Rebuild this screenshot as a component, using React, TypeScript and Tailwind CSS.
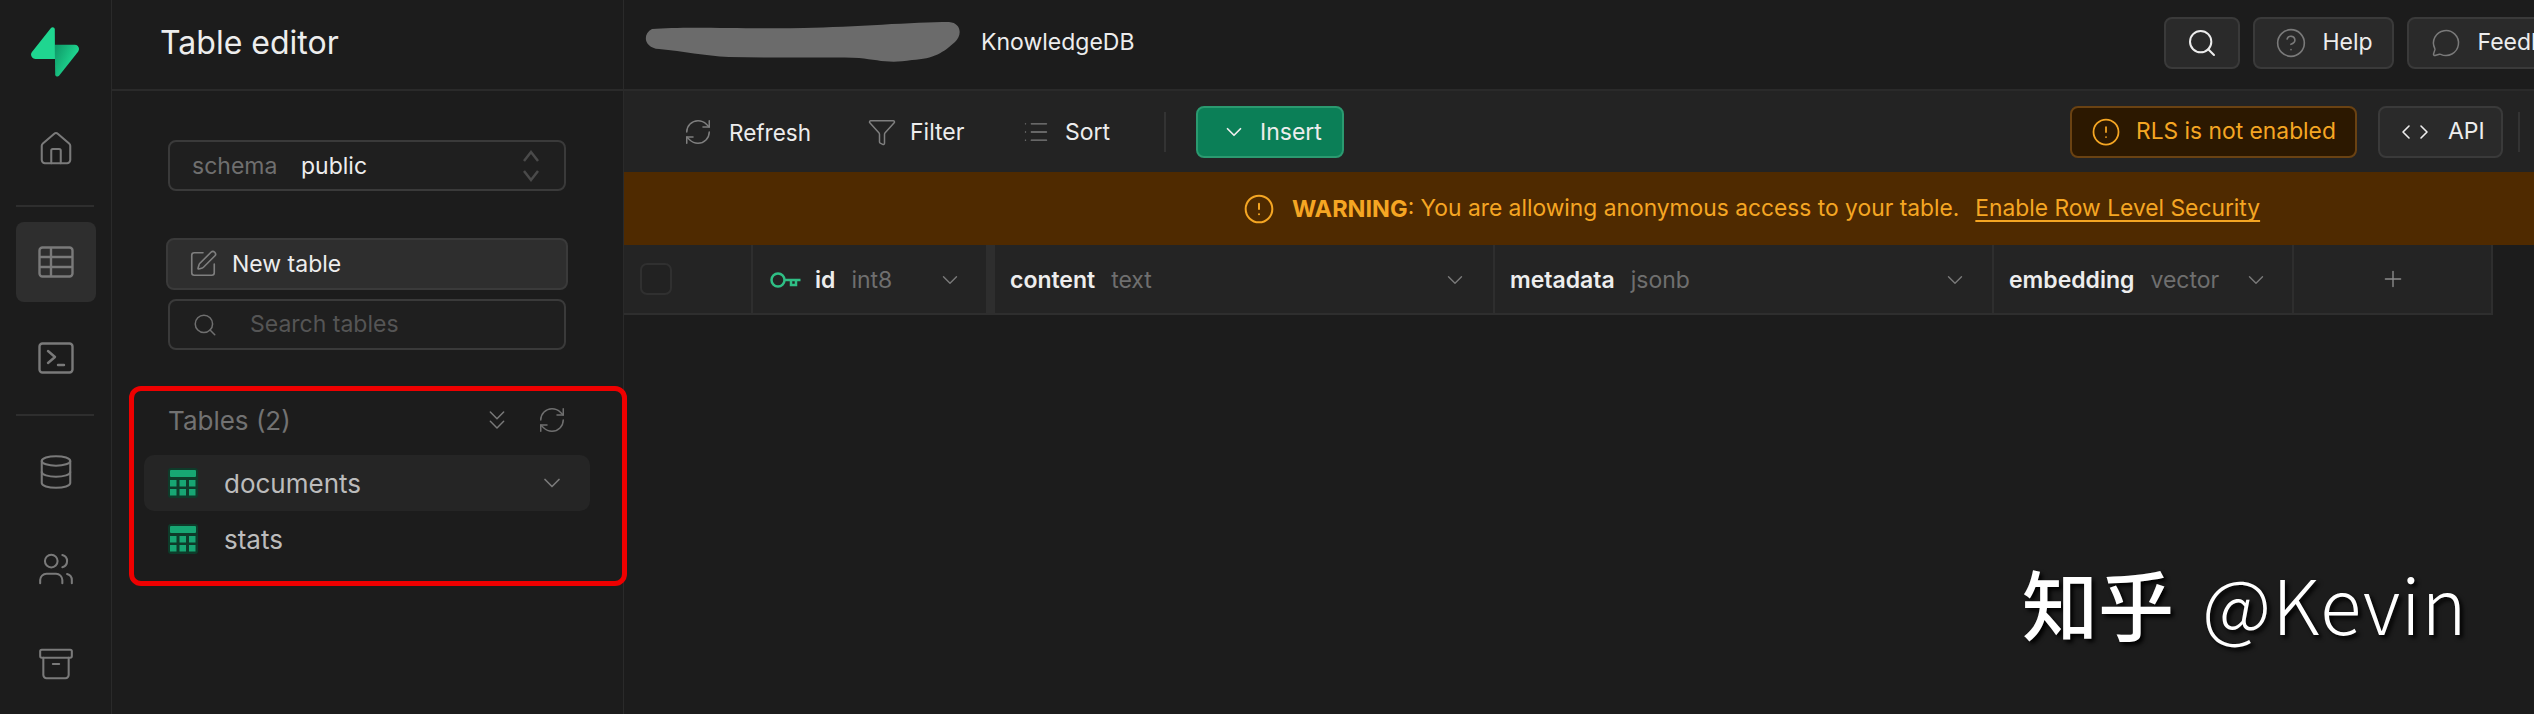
import React from "react";
import { House, Database, Users, Archive, SquarePen, Search, ChevronsDown, RefreshCw, ChevronDown, Funnel, List, CircleAlert, CircleHelp, MessageCircle, Plus, ChevronLeft, ChevronRight } from "lucide-react";

const Logo = () => (
  <svg width="48" height="50" viewBox="0 0 109 113" fill="none">
    <defs>
      <linearGradient id="lg" x1="54" y1="50" x2="100" y2="72" gradientUnits="userSpaceOnUse">
        <stop stopColor="#0f9a68" />
        <stop offset="1" stopColor="#1fd690" />
      </linearGradient>
    </defs>
    <path d="M63.7076 110.284C60.8481 113.885 55.0502 111.912 54.9813 107.314L53.9738 40.0627L99.1935 40.0627C107.384 40.0627 111.952 49.5228 106.859 55.9374L63.7076 110.284Z" fill="url(#lg)" />
    <path d="M45.317 2.07103C48.1765 -1.53037 53.9745 0.442937 54.0434 5.041L54.4849 72.2922H9.83113C1.64038 72.2922 -2.92775 62.8321 2.1655 56.4175L45.317 2.07103Z" fill="#1fd690" />
  </svg>
);

const GridIcon = () => (
  <svg width="36" height="32" viewBox="0 0 36 32" fill="none" stroke="#7a7a7a" strokeWidth="2.4">
    <rect x="1.5" y="1.5" width="33" height="29" rx="3" />
    <path d="M1.5 11h33M1.5 21h33M13 1.500v29" />
  </svg>
);

const TerminalIcon = () => (
  <svg width="36" height="32" viewBox="0 0 36 32" fill="none" stroke="#7a7a7a" strokeWidth="2.4" strokeLinecap="round" strokeLinejoin="round">
    <rect x="1.5" y="1.5" width="33" height="29" rx="3" />
    <path d="M10 9l7 6-7 6M20 23h6" />
  </svg>
);

const GreenTable = () => (
  <svg width="30" height="30" viewBox="0 0 30 30">
    <rect x="0" y="0" width="30" height="30" rx="3" fill="#0e3b2a" />
    <rect x="2" y="2" width="26" height="7" rx="1" fill="#17a673" />
    <g fill="#17a673">
      <rect x="2" y="12" width="6.500" height="6.500" /><rect x="11.500" y="12" width="6.500" height="6.500" /><rect x="21" y="12" width="6.500" height="6.500" />
      <rect x="2" y="21" width="6.500" height="6.500" /><rect x="11.500" y="21" width="6.500" height="6.500" /><rect x="21" y="21" width="6.500" height="6.500" />
    </g>
  </svg>
);

const KeyIcon = () => (
  <svg width="32" height="20" viewBox="0 0 32 20" fill="none" stroke="#2fbf85" strokeWidth="2.500">
    <circle cx="8" cy="10" r="6.500" />
    <path d="M14.500 10H30.500M21 10v5h5v-5" />
  </svg>
);

const Scribble = () => (
  <svg className="shrink-0" width="318" height="42" viewBox="0 0 318 42">
    <path d="M8 7C40 4 100 7 160 6C210 5 270 0 305 0C318 1 318 14 311 20C300 30 290 37 268 38C245 42 235 38 215 36C180 35 130 36 85 35C60 34 40 29 15 27C0 26 -2 12 8 7Z" fill="#6b6b6b" />
  </svg>
);

const RailItem = ({ children, active }: { children: React.ReactNode; active?: boolean }) => (
  <div className={`flex h-[80px] w-[80px] items-center justify-center rounded-[8px] ${active ? "bg-[#2e2e2e]" : ""}`}>{children}</div>
);

const Rail = () => (
  <div className="flex h-full w-[112px] shrink-0 flex-col items-start border-r border-[#2a2a2a] pl-[16px]">
    <div className="mt-[27px] ml-[15px] h-[50px]"><Logo /></div>
    <div className="mt-[32px]"><RailItem><House size={38} strokeWidth={1.3} color="#7a7a7a" /></RailItem></div>
    <div className="mt-[16px] h-[2px] w-[78px] bg-[#2e2e2e]" />
    <div className="mt-[15px]"><RailItem active><GridIcon /></RailItem></div>
    <div className="mt-[16px]"><RailItem><TerminalIcon /></RailItem></div>
    <div className="mt-[16px] h-[2px] w-[78px] bg-[#2e2e2e]" />
    <div className="mt-[16px]"><RailItem><Database size={38} strokeWidth={1.3} color="#7a7a7a" /></RailItem></div>
    <div className="mt-[17px]"><RailItem><Users size={38} strokeWidth={1.3} color="#7a7a7a" /></RailItem></div>
    <div className="mt-[15px]"><RailItem><Archive size={38} strokeWidth={1.3} color="#7a7a7a" /></RailItem></div>
  </div>
);

const Sidebar = () => (
  <div className="flex h-full w-[512px] shrink-0 flex-col border-r border-[#2a2a2a]">
    <div className="flex h-[91px] shrink-0 items-center border-b-2 border-[#2a2a2a] pb-[4px] pl-[48px] text-[32px] leading-none text-[#ededed]">Table editor</div>
    <div className="ml-[56px] mt-[49px] flex h-[51px] w-[398px] items-center rounded-[8px] border-2 border-[#3a3a3a] bg-[#1f1f1f] pl-[22px] pr-[24px] pt-[1px] text-[23px]">
      <span className="w-[109px] text-[#6f6f6f]">schema</span>
      <span className="text-[#ededed]">public</span>
      <svg className="ml-auto" width="18" height="36" viewBox="0 0 18 36" fill="none" stroke="#4a4a4a" strokeWidth="2.500"><path d="M2 13l7-9 7 9M2 23l7 9 7-9" /></svg>
    </div>
    <div className="ml-[54px] mt-[47px] flex h-[52px] w-[402px] items-center rounded-[8px] border-2 border-[#3a3a3a] bg-[#2e2e2e] pl-[20px] text-[23px] text-[#ededed]">
      <SquarePen size={30} strokeWidth={1.3} color="#7f7f7f" />
      <span className="ml-[14px]">New table</span>
    </div>
    <div className="ml-[56px] mt-[9px] flex h-[51px] w-[398px] items-center rounded-[8px] border-2 border-[#3a3a3a] bg-[#1f1f1f] pl-[22px] text-[23px] text-[#555555]">
      <Search size={26} strokeWidth={1.4} color="#6f6f6f" />
      <span className="ml-[32px]">Search tables</span>
    </div>
    <div className="relative z-10 ml-[17px] mt-[36px] h-[200px] w-[498px] rounded-[12px] border-[5px] border-[#ee0000] pt-[10px]">
      <div className="ml-[34px] flex h-[38px] w-[399px] items-center text-[26px] text-[#727272]">
        <span>Tables (2)</span>
        <ChevronsDown size={32} strokeWidth={1.1} color="#7a7a7a" className="ml-auto" />
        <RefreshCw size={30} strokeWidth={1.2} color="#6f6f6f" className="ml-[24px]" />
      </div>
      <div className="ml-[10px] mt-[16px] flex h-[56px] w-[446px] items-center rounded-[10px] bg-[#252525] pl-[24px] pr-[24px] text-[26px] text-[#bcbcbc]">
        <GreenTable />
        <span className="ml-[26px]">documents</span>
        <ChevronDown size={28} strokeWidth={1.5} color="#7a7a7a" className="ml-auto" />
      </div>
      <div className="ml-[10px] flex h-[56px] w-[446px] items-center pl-[24px] text-[26px] text-[#bcbcbc]">
        <GreenTable />
        <span className="ml-[26px]">stats</span>
      </div>
    </div>
  </div>
);

const TopBar = () => (
  <div className="flex h-[91px] shrink-0 items-center border-b-2 border-[#2a2a2a] pb-[4px] pl-[20px] text-[23px]">
    <Scribble />
    <span className="ml-[19px] shrink-0 text-[#ededed]">KnowledgeDB</span>
    <div className="ml-[1030px] flex h-[52px] w-[76px] shrink-0 items-center justify-center rounded-[8px] border-2 border-[#3a3a3a] bg-[#2a2a2a]">
      <Search size={32} strokeWidth={1.5} color="#ededed" />
    </div>
    <div className="ml-[13px] flex h-[52px] w-[141px] shrink-0 items-center rounded-[8px] border-2 border-[#3a3a3a] bg-[#2a2a2a] pl-[20px] text-[#ededed]">
      <CircleHelp size={32} strokeWidth={1.2} color="#7a7a7a" />
      <span className="ml-[15px]">Help</span>
    </div>
    <div className="ml-[13px] flex h-[52px] w-[200px] shrink-0 items-center rounded-[8px] border-2 border-[#3a3a3a] bg-[#2a2a2a] pl-[22px] text-[#ededed]">
      <MessageCircle size={30} strokeWidth={1.2} color="#7a7a7a" />
      <span className="ml-[16px]">Feedback</span>
    </div>
  </div>
);

const Toolbar = () => (
  <div className="flex h-[81px] shrink-0 items-center bg-[#232323] pl-[59px] text-[23px] text-[#ededed]">
    <div className="flex w-[184px] items-center"><RefreshCw size={30} strokeWidth={1.2} color="#7f7f7f" /><span className="ml-[16px] pt-[2px] text-[22.500px]">Refresh</span></div>
    <div className="flex w-[155px] items-center"><Funnel size={30} strokeWidth={1.2} color="#7f7f7f" /><span className="ml-[13px] pt-[2px]">Filter</span></div>
    <div className="flex w-[142px] items-center"><List size={28} strokeWidth={1.2} color="#7f7f7f" /><span className="ml-[15px] pt-[2px]">Sort</span></div>
    <div className="h-[40px] w-[2px] bg-[#333333]" />
    <div className="ml-[30px] flex h-[52px] w-[148px] shrink-0 items-center rounded-[8px] border-2 border-[#2b9a70] bg-[#0b7f57] pl-[23px]">
      <ChevronDown size={26} strokeWidth={1.6} color="#ededed" />
      <span className="ml-[13px] pt-[2px]">Insert</span>
    </div>
    <div className="ml-[726px] flex h-[52px] w-[287px] shrink-0 items-center rounded-[8px] border-2 border-[#6a4212] bg-[#2c1800] pl-[19px] text-[#f5a623]">
      <CircleAlert size={30} strokeWidth={1.4} />
      <span className="ml-[15px] text-[22.800px]">RLS is not enabled</span>
    </div>
    <div className="ml-[21px] flex h-[52px] w-[125px] shrink-0 items-center rounded-[8px] border-2 border-[#3a3a3a] bg-[#2a2a2a] pl-[14px]">
      <ChevronLeft size={24} strokeWidth={1.6} className="-mr-[6px]" />
      <ChevronRight size={24} strokeWidth={1.6} />
      <span className="ml-[12px]">API</span>
    </div>
    <div className="ml-[15px] h-[40px] w-[2px] bg-[#333333]" />
  </div>
);

const Banner = () => (
  <div className="flex h-[73px] shrink-0 items-center justify-center bg-[#4f2a00] pl-[333px] text-[23px] text-[#f5a623]">
    <div className="ml-[12px] flex items-center whitespace-nowrap">
      <CircleAlert size={32} strokeWidth={1.5} />
      <span className="ml-[17px] font-bold text-[23.500px]">WARNING</span>
      <span className="text-[22.800px]">: You are allowing anonymous access to your table.</span>
      <span className="ml-[16px] text-[22.800px] underline underline-offset-4">Enable Row Level Security</span>
    </div>
  </div>
);

const Col = ({ w, name, type, chevMl, icon }: { w: string; name: string; type: string; chevMl: string; icon?: boolean }) => (
  <div className={`flex h-full shrink-0 items-center border-r-2 border-[#2e2e2e] pt-[2px] ${w}`}>
    {icon ? <span className="ml-[17px] mr-[13px]"><KeyIcon /></span> : <span className="ml-[15px]" />}
    <span className="font-semibold text-[#ededed]">{name}</span>
    <span className="ml-[16px] text-[#6f6f6f]">{type}</span>
    <ChevronDown size={26} strokeWidth={1.3} color="#7a7a7a" className={`absolute ${chevMl}`} />
  </div>
);

const TableHead = () => (
  <div className="flex h-[70px] w-[1869px] shrink-0 items-center border-b-2 border-[#2e2e2e] bg-[#242424] text-[23px]">
    <div className="flex h-full w-[129px] shrink-0 items-center border-r-2 border-[#2e2e2e] pl-[16px]">
      <div className="h-[32px] w-[32px] rounded-[7px] border-2 border-[#303030] bg-[#222222]" />
    </div>
    <Col w="w-[235px]" name="id" type="int8" chevMl="left-[937px]" icon />
    <div className="h-full w-[7px] shrink-0 bg-[#2e2e2e]" />
    <Col w="w-[500px]" name="content" type="text" chevMl="left-[1442px]" />
    <Col w="w-[499px]" name="metadata" type="jsonb" chevMl="left-[1942px]" />
    <Col w="w-[300px]" name="embedding" type="vector" chevMl="left-[2243px]" />
    <div className="flex h-full w-[199px] shrink-0 items-center justify-center border-r-2 border-[#2e2e2e]">
      <Plus size={26} strokeWidth={1.3} color="#8a8a8a" />
    </div>
  </div>
);

export default function App() {
  return (
    <div className="relative flex h-[714px] w-[2534px] overflow-hidden bg-[#1c1c1c] font-['Inter','Noto_Sans_CJK_SC',sans-serif]">
      <Rail />
      <Sidebar />
      <div className="flex min-w-0 flex-1 flex-col">
        <TopBar />
        <Toolbar />
        <Banner />
        <TableHead />
      </div>
      <div className="absolute left-[2022px] top-[557px] flex items-center whitespace-nowrap leading-[90px] text-white [font-family:'Noto_Sans_CJK_SC',sans-serif] [text-shadow:3px_3px_4px_#000]">
        <span className="text-[76px] font-medium">知乎</span>
        <span className="ml-[28px] text-[76px] font-light tracking-[1px]">@Kevin</span>
      </div>
    </div>
  );
}
